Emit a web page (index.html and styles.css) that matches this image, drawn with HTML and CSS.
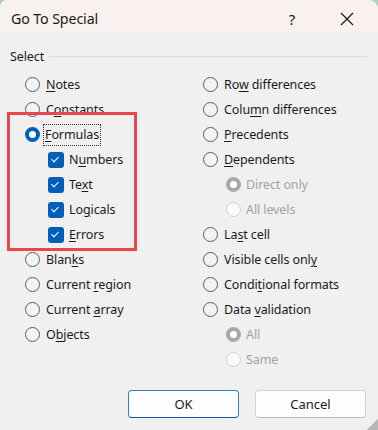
FILE: index.html
```html
<!DOCTYPE html>
<html lang="en">
<head>
  <meta charset="UTF-8">
  <title>Go To Special</title>
  <link rel="stylesheet" href="styles.css">
</head>
<body>
  <div class="dialog">
    <header class="titlebar">
      <span class="title">Go To Special</span>
      <span class="help">?</span>
      <span class="close">
        <svg width="14" height="14" viewBox="0 0 14 14"><path d="M1 1 L13 13 M13 1 L1 13" stroke="#1a1a1a" stroke-width="1.2" fill="none"/></svg>
      </span>
    </header>

    <div class="group">
      <div class="legend"><span>Select</span><i class="rule"></i></div>

      <div class="columns">
        <div class="col">
          <label class="row"><span class="radio"></span><span><u>N</u>otes</span></label>
          <label class="row"><span class="radio"></span><span>C<u>o</u>nstants</span></label>
          <label class="row"><span class="radio checked"></span><span class="focus"><u>F</u>ormulas</span></label>
          <label class="row sub"><span class="check"></span><span>N<u>u</u>mbers</span></label>
          <label class="row sub"><span class="check"></span><span>Te<u>x</u>t</span></label>
          <label class="row sub"><span class="check"></span><span>Lo<u>g</u>icals</span></label>
          <label class="row sub"><span class="check"></span><span><u>E</u>rrors</span></label>
          <label class="row"><span class="radio"></span><span>Blan<u>k</u>s</span></label>
          <label class="row"><span class="radio"></span><span>Current <u>r</u>egion</span></label>
          <label class="row"><span class="radio"></span><span>Current <u>a</u>rray</span></label>
          <label class="row"><span class="radio"></span><span>O<u>b</u>jects</span></label>
        </div>
        <div class="col">
          <label class="row"><span class="radio"></span><span>Ro<u>w</u> differences</span></label>
          <label class="row"><span class="radio"></span><span>Colu<u>m</u>n differences</span></label>
          <label class="row"><span class="radio"></span><span><u>P</u>recedents</span></label>
          <label class="row"><span class="radio"></span><span><u>D</u>ependents</span></label>
          <label class="row sub off"><span class="radio checked"></span><span>Direct only</span></label>
          <label class="row sub off"><span class="radio"></span><span>All levels</span></label>
          <label class="row"><span class="radio"></span><span>La<u>s</u>t cell</span></label>
          <label class="row"><span class="radio"></span><span>Visible cells onl<u>y</u></span></label>
          <label class="row"><span class="radio"></span><span>Condi<u>t</u>ional formats</span></label>
          <label class="row"><span class="radio"></span><span>Data <u>v</u>alidation</span></label>
          <label class="row sub off"><span class="radio checked"></span><span>All</span></label>
          <label class="row sub off"><span class="radio"></span><span>Same</span></label>
        </div>
      </div>

      <div class="highlight"></div>
    </div>

    <footer class="buttons">
      <button class="btn primary">OK</button>
      <button class="btn">Cancel</button>
    </footer>
    <div class="grip"></div>
  </div>
</body>
</html>
```

FILE: styles.css
```css
html, body {
  margin: 0;
  height: 100%;
  background: #a9cfc3;
}

.dialog {
  position: relative;
  width: 378px;
  height: 430px;
  background: #f0f0f0;
  border-radius: 7px 9px 0 0;
  overflow: hidden;
  font-family: "Noto Sans", "Open Sans", sans-serif;
  font-size: 12.5px;
  letter-spacing: -0.1px;
  color: #1b1b1b;
}

.titlebar {
  height: 38px;
  display: flex;
  align-items: center;
  background: linear-gradient(#f8f1ef 0, #f8f1ef 30px, #f1efee 38px);
  padding-left: 11px;
}

.title {
  font-size: 14.2px;
  flex: 1;
  padding-bottom: 1px;
}

.help {
  font-size: 15px;
  width: 20px;
  margin-right: 38px;
  text-align: center;
}

.close {
  width: 14px;
  margin-right: 24px;
  display: flex;
}

.group {
  position: relative;
  padding-top: 8px;
}

.legend {
  display: flex;
  align-items: center;
  height: 20px;
  padding-left: 10px;
  padding-right: 11px;
}

.rule {
  flex: 1;
  border-top: 1px solid #dadada;
  margin-left: 5px;
  margin-top: 1px;
}

.columns {
  display: grid;
  grid-template-columns: 190px 188px;
  margin-top: 6px;
}

.col {
  display: flex;
  flex-direction: column;
  padding-left: 25px;
}

.col + .col {
  padding-left: 13px;
}

.row {
  height: 25px;
  display: flex;
  align-items: center;
  gap: 6px;
  white-space: nowrap;
}

.row.sub {
  padding-left: 23px;
  gap: 5px;
}

.row u {
  text-underline-offset: 2px;
}

.radio {
  box-sizing: border-box;
  width: 15px;
  height: 15px;
  border: 1px solid #5c5c5c;
  border-radius: 50%;
  background: #f3f3f3;
  flex: none;
}

.radio.checked {
  border: 4px solid #005fb8;
  background: #ffffff;
}

.off {
  color: #a3a3a3;
}

.off .radio {
  border-color: #cfcfcf;
  background: #fafafa;
}

.off .radio.checked {
  border: 4px solid #a8a8a8;
  background: #ffffff;
}

.check {
  box-sizing: border-box;
  width: 16px;
  height: 16px;
  border-radius: 3px;
  background: #005fb8;
  flex: none;
  position: relative;
}

.check::after {
  content: "";
  position: absolute;
  left: 5px;
  top: 3px;
  width: 3px;
  height: 6px;
  border: solid #ffffff;
  border-width: 0 1.3px 1.3px 0;
  transform: rotate(45deg);
}

.focus {
  outline: 1px dotted #333333;
  outline-offset: 0;
  padding: 1px 1px 2px 1px;
  margin-left: -2px;
}

.highlight {
  position: absolute;
  left: 7px;
  top: 74px;
  width: 124px;
  height: 133px;
  border: 3px solid #e8474e;
}

.buttons {
  position: absolute;
  right: 12px;
  bottom: 12px;
  display: flex;
  gap: 16px;
}

.btn {
  width: 111px;
  height: 28px;
  font-family: "Noto Sans", "Open Sans", sans-serif;
  font-size: 13px;
  color: #1b1b1b;
  background: #fdfdfd;
  border: 1px solid #d2d2d2;
  border-bottom-color: #bdbdbd;
  border-radius: 4px;
}

.btn.primary {
  border-color: #2f7fcc;
  border-bottom-color: #0a5aa8;
}

.grip {
  position: absolute;
  right: -8px;
  bottom: -8px;
  width: 16px;
  height: 16px;
  background: #8f8f8f;
  transform: rotate(45deg);
  opacity: 0.6;
}
```
